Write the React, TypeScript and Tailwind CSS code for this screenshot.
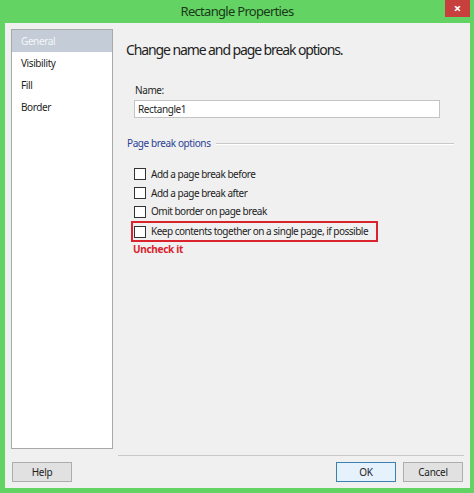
const font = { fontFamily: '"Noto Sans", "Open Sans", sans-serif' };

function Check({ label }: { label: string }) {
  return (
    <div className="flex h-[18.7px] items-center gap-[5px] whitespace-nowrap">
      <span className="h-[12px] w-[12px] shrink-0 border border-[#333333] bg-white" />
      <span className="text-[10px] tracking-[-0.5px] text-[#1e1e1e]">{label}</span>
    </div>
  );
}

function Button({ label, primary }: { label: string; primary?: boolean }) {
  return (
    <button
      className={
        "flex h-[20px] w-[60px] items-center justify-center border text-[10px] tracking-[-0.3px] text-[#1e1e1e] " +
        (primary ? "border-[#3c7fb1] bg-[#e5f1fb]" : "border-[#adadad] bg-[#e1e1e1]")
      }
    >
      {label}
    </button>
  );
}

export default function App() {
  return (
    <div className="flex h-[493px] w-[474px] flex-col bg-[#63d363]" style={font}>
      <div className="relative flex h-[23px] items-center justify-center">
        <span className="text-[13px] tracking-[-0.7px] text-[#1a3a1a]">Rectangle Properties</span>
        <div className="absolute right-[4px] top-0 flex h-[17px] w-[25px] items-center justify-center bg-[#c8403e] text-[13px] font-bold leading-none text-white">
          ×
        </div>
      </div>

      <div className="mb-[5px] ml-[5px] mr-[4px] flex flex-1 flex-col bg-[#f0f0f0]">
        <div className="flex flex-1">
          <div className="ml-[6px] mt-[6px] w-[102px] border border-[#a8a8a8] bg-white">
            <div className="flex h-[22px] items-center bg-[#c3ccd7] pl-[9px] text-[10px] tracking-[-0.4px] text-[#f4f6f8]">
              General
            </div>
            {["Visibility", "Fill", "Border"].map((t) => (
              <div
                key={t}
                className="flex h-[22px] items-center pl-[9px] text-[10px] tracking-[-0.4px] text-[#1e1e1e]"
              >
                {t}
              </div>
            ))}
          </div>

          <div className="flex flex-1 flex-col pl-[8px] pr-[6px]">
            <div className="pl-[5px] pt-[17px] text-[14px] leading-[20px] tracking-[-1.1px] text-[#1e1e1e]">
              Change name and page break options.
            </div>
            <div className="pl-[14px] pt-[23px] text-[10px] tracking-[-0.4px] text-[#1e1e1e]">Name:</div>
            <div className="ml-[13px] mt-[2px] flex h-[18px] w-[306px] items-center border border-[#c4c4c4] bg-white pl-[3px] text-[10px] tracking-[-0.4px] text-[#1e1e1e]">
              Rectangle1
            </div>
            <div className="mt-[18px] flex items-center gap-[5px] pl-[6px]">
              <span className="text-[10px] tracking-[-0.4px] text-[#2b3f94]">Page break options</span>
              <span className="mr-[10px] h-0 flex-1 border-t border-b border-t-[#c8c8c8] border-b-white" />
            </div>
            <div className="ml-[13px] mt-[14px] flex flex-col">
              <Check label="Add a page break before" />
              <Check label="Add a page break after" />
              <Check label="Omit border on page break" />
              <div className="-ml-[3px] flex h-[21px] w-[247px] items-center border-2 border-[#d9232d] pl-[1px]">
                <Check label="Keep contents together on a single page, if possible" />
              </div>
              <div className="-ml-[1px] text-[10px] font-bold leading-[14px] tracking-[-0.3px] text-[#d9232d]">
                Uncheck it
              </div>
            </div>
          </div>
        </div>

        <div className="ml-[113px] mr-[6px] mt-[6px] border-t border-[#c8c8c8]" />
        <div className="flex items-center justify-between px-[7px] pb-[6px] pt-[6px]">
          <Button label="Help" />
          <div className="flex gap-[7px]">
            <Button label="OK" primary />
            <Button label="Cancel" />
          </div>
        </div>
      </div>
    </div>
  );
}
